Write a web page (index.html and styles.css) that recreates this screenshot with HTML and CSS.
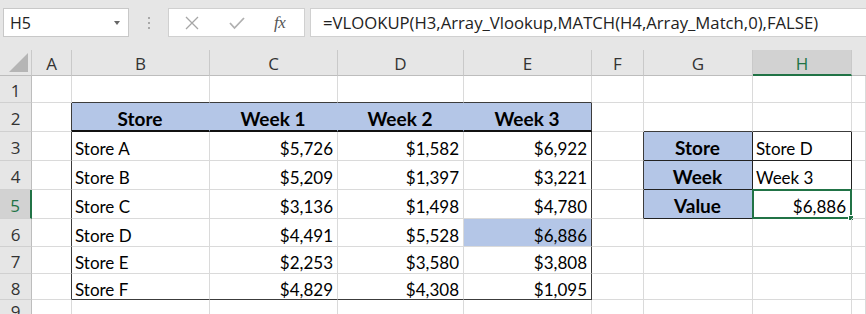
FILE: index.html
```html
<!DOCTYPE html>
<html>
<head>
<meta charset="utf-8">
<link rel="stylesheet" href="styles.css">
</head>
<body>
<div class="bar">
  <div class="namebox"><span class="ref">H5</span><span class="caret"></span></div>
  <div class="dots"><i></i><i></i><i></i></div>
  <div class="fbtns">
    <svg class="ic" width="14" height="14" viewBox="0 0 14 14"><path d="M1 1L13 13M13 1L1 13" stroke="#a6a6a6" stroke-width="1.3" fill="none"/></svg>
    <svg class="ic" width="16" height="14" viewBox="0 0 16 14"><path d="M1 7L5.5 12L15 2" stroke="#b0b0b0" stroke-width="1.8" fill="none"/></svg>
    <span class="fx">fx</span>
  </div>
  <div class="formula">=VLOOKUP(H3,Array_Vlookup,MATCH(H4,Array_Match,0),FALSE)</div>
</div>
<div class="sheet">
  <div class="ch corner"><span class="tri"></span></div>
  <div class="ch">A</div><div class="ch">B</div><div class="ch">C</div><div class="ch">D</div><div class="ch">E</div><div class="ch">F</div><div class="ch">G</div><div class="ch sel">H</div><div class="ch last"></div>

  <div class="rh">1</div>
  <div class="c"></div><div class="c bB"></div><div class="c bB"></div><div class="c bB"></div><div class="c bB"></div><div class="c"></div><div class="c"></div><div class="c"></div><div class="c"></div>

  <div class="rh">2</div>
  <div class="c bR"></div>
  <div class="c hd">Store</div><div class="c hd">Week 1</div><div class="c hd">Week 2</div><div class="c hd bR">Week 3</div>
  <div class="c"></div><div class="c bB"></div><div class="c bB"></div><div class="c"></div>

  <div class="rh">3</div>
  <div class="c bR"></div>
  <div class="c">Store A</div><div class="c n">$5,726</div><div class="c n">$1,582</div><div class="c n bR">$6,922</div>
  <div class="c bR"></div><div class="c g">Store</div><div class="c v">Store D</div><div class="c"></div>

  <div class="rh">4</div>
  <div class="c bR"></div>
  <div class="c">Store B</div><div class="c n">$5,209</div><div class="c n">$1,397</div><div class="c n bR">$3,221</div>
  <div class="c bR"></div><div class="c g">Week</div><div class="c v">Week 3</div><div class="c"></div>

  <div class="rh rsel">5</div>
  <div class="c bR"></div>
  <div class="c">Store C</div><div class="c n">$3,136</div><div class="c n">$1,498</div><div class="c n bR">$4,780</div>
  <div class="c bR"></div><div class="c g">Value</div><div class="c n act">$6,886<span class="handle"></span></div><div class="c"></div>

  <div class="rh">6</div>
  <div class="c bR"></div>
  <div class="c">Store D</div><div class="c n">$4,491</div><div class="c n">$5,528</div><div class="c n bR hl">$6,886</div>
  <div class="c"></div><div class="c"></div><div class="c"></div><div class="c"></div>

  <div class="rh">7</div>
  <div class="c bR"></div>
  <div class="c">Store E</div><div class="c n">$2,253</div><div class="c n">$3,580</div><div class="c n bR">$3,808</div>
  <div class="c"></div><div class="c"></div><div class="c"></div><div class="c"></div>

  <div class="rh">8</div>
  <div class="c bR"></div>
  <div class="c bB">Store F</div><div class="c n bB">$4,829</div><div class="c n bB">$4,308</div><div class="c n bR bB">$1,095</div>
  <div class="c"></div><div class="c"></div><div class="c"></div><div class="c"></div>

  <div class="rh">9</div>
  <div class="c"></div><div class="c"></div><div class="c"></div><div class="c"></div><div class="c"></div><div class="c"></div><div class="c"></div><div class="c"></div><div class="c"></div>
</div>
</body>
</html>
```
FILE: styles.css
```css
* { box-sizing: border-box; }
html, body { margin: 0; padding: 0; }
body {
  width: 866px;
  height: 314px;
  overflow: hidden;
  background: #ffffff;
  font-family: "Open Sans", "Noto Sans", sans-serif;
}
.bar {
  height: 50px;
  background: #e6e6e6;
  display: flex;
  align-items: flex-start;
  padding: 8px 0 0 3px;
}
.namebox {
  width: 126px;
  height: 29px;
  background: #fff;
  border: 1px solid #c8c8c8;
  display: flex;
  align-items: center;
  justify-content: space-between;
  padding: 0 8px 0 6px;
}
.ref { font-size: 16px; color: #222; }
.caret {
  width: 0; height: 0;
  border-left: 3.5px solid transparent;
  border-right: 3.5px solid transparent;
  border-top: 4px solid #666;
}
.dots {
  width: 39px;
  height: 29px;
  display: flex;
  flex-direction: column;
  align-items: center;
  justify-content: center;
  gap: 3px;
}
.dots i { display: block; width: 2px; height: 2px; background: #a8a8a8; }
.fbtns {
  width: 137px;
  height: 29px;
  background: #fff;
  border: 1px solid #d0d0d0;
  display: flex;
  align-items: center;
  padding: 0 0 0 16px;
}
.fbtns .ic:first-child { margin-right: 30px; }
.fbtns .ic:nth-child(2) { margin-right: 29px; }
.fx {
  font-family: "Liberation Serif", "DejaVu Serif", serif;
  font-style: italic;
  font-size: 17px;
  color: #555;
  letter-spacing: -0.5px;
}
.formula {
  margin-left: 5px;
  flex: 1;
  height: 29px;
  background: #fff;
  border: 1px solid #d0d0d0;
  border-right: none;
  display: flex;
  align-items: center;
  padding-left: 12px;
  font-size: 16.7px;
  color: #222;
  white-space: nowrap;
}
.sheet {
  display: grid;
  grid-template-columns: 32px 40px 138px 128px 126px 128px 52px 109px 99px 14px;
  grid-template-rows: 26px 27px 29px 29px 29px 29px 28px 27px 26px 20px;
  height: 264px;
  overflow: hidden;
}
.ch {
  background: #e6e6e6;
  border-right: 1px solid #c9c9c9;
  border-bottom: 1px solid #bdbdbd;
  display: flex;
  align-items: center;
  justify-content: center;
  padding-top: 2px;
  font-size: 17px;
  color: #333;
}
.ch.last { border-right: none; }
.ch.sel {
  background: #d2d2d2;
  color: #217346;
  border-bottom: 2px solid #217346;
}
.corner { justify-content: flex-end; align-items: flex-end; padding: 0 3px 3px 0; }
.tri {
  width: 0; height: 0;
  border-left: 19px solid transparent;
  border-bottom: 19px solid #b5b5b5;
}
.rh {
  background: #e6e6e6;
  border-right: 1px solid #bdbdbd;
  border-bottom: 1px solid #d0d0d0;
  display: flex;
  align-items: center;
  justify-content: center;
  padding-top: 3px;
  font-size: 17px;
  color: #333;
}
.rh.rsel {
  background: #d2d2d2;
  color: #217346;
  border-right: 2px solid #217346;
}
.c {
  position: relative;
  border-right: 1px solid #dadada;
  border-bottom: 1px solid #dadada;
  display: flex;
  align-items: center;
  padding: 5px 4px 0 3px;
  font-family: "Lato", "Carlito", sans-serif;
  font-size: 17px;
  color: #000;
  white-space: nowrap;
}
.c.n { justify-content: flex-end; }
.c.bR { border-right-color: #3c3c3c; }
.c.bB { border-bottom-color: #3c3c3c; }
.c.hd {
  background: #b4c6e7;
  border-right-color: #b4c6e7;
  border-bottom: 2px solid #111;
  justify-content: center;
  font-weight: bold;
  font-size: 19px;
  padding-top: 4px;
}
.c.hd.bR { border-right-color: #3c3c3c; }
.c.hl { background: #b4c6e7; }
.c.g {
  background: #b4c6e7;
  border-right: 1px solid #222;
  border-bottom: 1px solid #222;
  justify-content: center;
  font-weight: bold;
  font-size: 19px;
  padding-top: 3px;
}
.c.v {
  border-right: 1px solid #222;
  border-bottom: 1px solid #222;
}
.c.act {
  border: 2px solid #217346;
  margin: -1px 0 0 -1px;
}
.handle {
  position: absolute;
  right: -4px;
  bottom: -4px;
  width: 6px;
  height: 6px;
  background: #217346;
  border: 1px solid #fff;
}
```
